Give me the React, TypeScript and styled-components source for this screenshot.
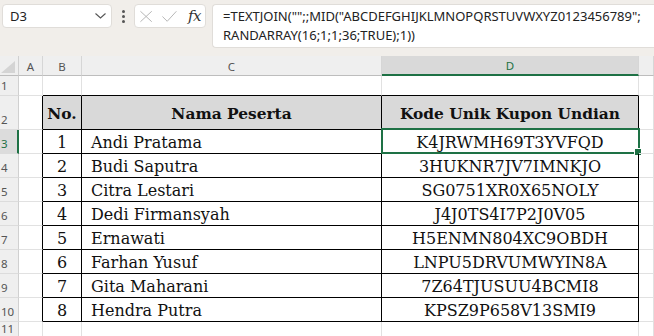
import React from 'react'
import styled, { createGlobalStyle, css } from 'styled-components'

const GREEN = '#1e7145'
const GRID = '#e1e1e1'

const GlobalStyle = createGlobalStyle`
  html, body {
    margin: 0;
    padding: 0;
    background: #fff;
    overflow: hidden;
  }
  body {
    font-family: 'Noto Sans', 'Open Sans', sans-serif;
  }
`

const people = [
  { no: 1, name: 'Andi Pratama', code: 'K4JRWMH69T3YVFQD' },
  { no: 2, name: 'Budi Saputra', code: '3HUKNR7JV7IMNKJO' },
  { no: 3, name: 'Citra Lestari', code: 'SG0751XR0X65NOLY' },
  { no: 4, name: 'Dedi Firmansyah', code: 'J4J0TS4I7P2J0V05' },
  { no: 5, name: 'Ernawati', code: 'H5ENMN804XC9OBDH' },
  { no: 6, name: 'Farhan Yusuf', code: 'LNPU5DRVUMWYIN8A' },
  { no: 7, name: 'Gita Maharani', code: '7Z64TJUSUU4BCMI8' },
  { no: 8, name: 'Hendra Putra', code: 'KPSZ9P658V13SMI9' },
]

export default function App() {
  return (
    <Window>
      <GlobalStyle />
      <Toolbar>
        <NameBox>
          <span>D3</span>
          <svg width="11" height="6" viewBox="0 0 11 6">
            <path d="M0.5 0.5 L5.5 5 L10.5 0.5" fill="none" stroke="#555" strokeWidth="1.1" />
          </svg>
        </NameBox>
        <Grip>
          <i />
          <i />
          <i />
        </Grip>
        <FxBox>
          <svg width="14" height="13" viewBox="0 0 14 13">
            <path d="M0.5 0.5 L13.5 12.5 M13.5 0.5 L0.5 12.5" stroke="#b4b4b4" strokeWidth="1.1" fill="none" />
          </svg>
          <svg width="17" height="13" viewBox="0 0 17 13">
            <path d="M0.5 6.5 L6 12 L16.5 0.5" stroke="#b4b4b4" strokeWidth="1.1" fill="none" />
          </svg>
          <Fx>fx</Fx>
        </FxBox>
        <FormulaBox>
          {'=TEXTJOIN("";;MID("ABCDEFGHIJKLMNOPQRSTUVWXYZ0123456789";\nRANDARRAY(16;1;1;36;TRUE);1))'}
        </FormulaBox>
      </Toolbar>

      <Sheet>
        <Corner>
          <svg width="14" height="12" viewBox="0 0 14 12">
            <path d="M14 0 L14 12 L0 12 Z" fill="#d4d4d4" />
          </svg>
        </Corner>
        {['A', 'B', 'C', 'D', 'E'].map((c) => (
          <ColHead key={c} $selected={c === 'D'}>
            {c !== 'E' ? c : ''}
          </ColHead>
        ))}

        {/* row 1 */}
        <RowHead>1</RowHead>
        <Cell />
        <Cell $boxBottom />
        <Cell $boxBottom />
        <Cell $boxBottom />
        <Cell />

        {/* row 2: table header */}
        <RowHead>2</RowHead>
        <Cell $boxRight />
        <Cell $boxRight $boxBottom $head $align="center">No.</Cell>
        <Cell $boxRight $boxBottom $head $align="center">Nama Peserta</Cell>
        <Cell $boxRight $boxBottom $head $align="center">Kode Unik Kupon Undian</Cell>
        <Cell />

        {people.map((p, i) => {
          const r = i + 3
          const selected = r === 3
          return (
            <React.Fragment key={p.no}>
              <RowHead $selected={selected}>{r}</RowHead>
              <Cell $boxRight />
              <Cell $boxRight $boxBottom $align="center">{p.no}</Cell>
              <Cell $boxRight $boxBottom $align="left">{p.name}</Cell>
              <Cell $boxRight $boxBottom $align="center">
                {p.code}
                {selected && (
                  <Selection>
                    <Handle />
                  </Selection>
                )}
              </Cell>
              <Cell />
            </React.Fragment>
          )
        })}

        <RowHead>11</RowHead>
        <Cell />
        <Cell />
        <Cell />
        <Cell />
        <Cell />
      </Sheet>
    </Window>
  )
}

const Window = styled.div`
  width: 654px;
  height: 336px;
  overflow: hidden;
  display: flex;
  flex-direction: column;
`

const Toolbar = styled.div`
  flex: none;
  height: 56px;
  box-sizing: border-box;
  background: #f1eeea;
  display: flex;
  align-items: flex-start;
  padding: 4px 0 0 2px;
`

const NameBox = styled.div`
  width: 110px;
  height: 24px;
  box-sizing: border-box;
  background: #fff;
  border: 1px solid #e0ddd9;
  border-radius: 4px;
  display: flex;
  align-items: center;
  justify-content: space-between;
  padding: 0 5px 0 7px;
  font-size: 13px;
  color: #222;
`

const Grip = styled.div`
  width: 22px;
  height: 24px;
  display: flex;
  flex-direction: column;
  align-items: center;
  justify-content: center;
  gap: 2px;
  & i {
    display: block;
    width: 3px;
    height: 3px;
    border-radius: 50%;
    background: #555;
  }
`

const FxBox = styled.div`
  width: 72px;
  height: 24px;
  box-sizing: border-box;
  background: #fff;
  border: 1px solid #e0ddd9;
  border-radius: 4px;
  display: flex;
  align-items: center;
  padding: 0 4px 0 5px;
  gap: 10px;
`

const Fx = styled.span`
  font-family: 'DejaVu Serif', serif;
  font-style: italic;
  font-size: 15px;
  color: #333;
  margin-left: 1px;
  letter-spacing: -0.5px;
`

const FormulaBox = styled.div`
  margin-left: 6px;
  flex: 1;
  height: 44px;
  box-sizing: border-box;
  background: #fff;
  border: 1px solid #e0ddd9;
  border-right: none;
  border-radius: 4px 0 0 4px;
  padding: 2px 0 0 10px;
  font-size: 13px;
  line-height: 19px;
  color: #222;
  white-space: pre;
  overflow: hidden;
`

const Sheet = styled.div`
  flex: 1;
  display: grid;
  grid-template-columns: 19px 24px 39px 300px 257px 1fr;
  grid-template-rows: 20px 20px 34px repeat(8, 24px) 1fr;
  background: #fff;
`

const headBase = css`
  box-sizing: border-box;
  background: #efefef;
  color: #555;
  font-family: 'Noto Sans', sans-serif;
  font-size: 11.5px;
`

const Corner = styled.div`
  ${headBase};
  border-right: 1px solid #d0d0d0;
  border-bottom: 1px solid #bdbdbd;
  display: flex;
  align-items: flex-end;
  justify-content: flex-end;
  padding: 0 3px 2px 0;
`

const ColHead = styled.div<{ $selected?: boolean }>`
  ${headBase};
  border-right: 1px solid #d6d6d6;
  border-bottom: 1px solid #bdbdbd;
  display: flex;
  align-items: center;
  justify-content: center;
  padding-top: 1px;
  ${(p) =>
    p.$selected &&
    css`
      background: #d9d9d9;
      color: ${GREEN};
      border-bottom: 2px solid ${GREEN};
    `}
`

const RowHead = styled.div<{ $selected?: boolean }>`
  ${headBase};
  border-right: 1px solid #d0d0d0;
  border-bottom: 1px solid #dcdcdc;
  display: flex;
  align-items: flex-end;
  justify-content: flex-start;
  padding: 0 0 2px 1px;
  line-height: 14px;
  ${(p) =>
    p.$selected &&
    css`
      background: #dcdcdc;
      color: ${GREEN};
      border-right: 2px solid ${GREEN};
    `}
`

const Cell = styled.div<{
  $boxRight?: boolean
  $boxBottom?: boolean
  $head?: boolean
  $align?: 'left' | 'center'
}>`
  position: relative;
  box-sizing: border-box;
  border-right: 1px solid ${(p) => (p.$boxRight ? '#000' : GRID)};
  border-bottom: 1px solid ${(p) => (p.$boxBottom ? '#000' : GRID)};
  display: flex;
  align-items: center;
  justify-content: ${(p) => (p.$align === 'left' ? 'flex-start' : 'center')};
  padding: 2px 0 0 ${(p) => (p.$align === 'left' ? '9px' : '0')};
  font-family: 'DejaVu Serif', serif;
  font-size: 16px;
  color: #111;
  white-space: nowrap;
  ${(p) =>
    p.$head &&
    css`
      background: #d9d9d9;
      font-weight: bold;
      font-size: 15.4px;
      padding-top: 2px;
    `}
`

const Selection = styled.div`
  position: absolute;
  left: -1px;
  top: -2px;
  right: -2px;
  bottom: -1px;
  border: 2px solid ${GREEN};
  pointer-events: none;
`

const Handle = styled.div`
  position: absolute;
  right: -4px;
  bottom: -4px;
  width: 6px;
  height: 6px;
  background: ${GREEN};
  border: 1px solid #fff;
  box-sizing: content-box;
`
